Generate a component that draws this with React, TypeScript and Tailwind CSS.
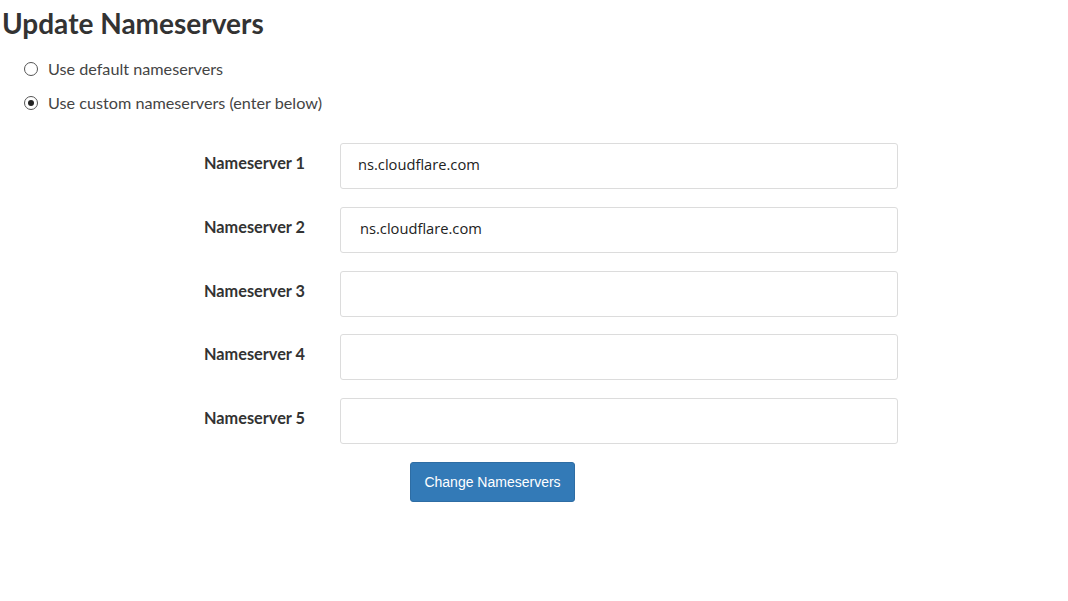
import React, { useState } from "react";

const servers = ["ns.cloudflare.com", "ns.cloudflare.com", "", "", ""];

const Radio: React.FC<{ checked: boolean; label: string; onClick: () => void }> = ({
  checked,
  label,
  onClick,
}) => (
  <label className="flex items-center h-[34px] cursor-pointer" onClick={onClick}>
    <span className="ml-[24px] w-[14px] h-[14px] rounded-full border border-[#555] flex items-center justify-center bg-white">
      {checked && <span className="w-[6px] h-[6px] rounded-full bg-[#222]" />}
    </span>
    <span className="ml-[10px] text-[16.2px] text-[#444]">{label}</span>
  </label>
);

export default function App() {
  const [mode, setMode] = useState<"default" | "custom">("custom");
  const [values, setValues] = useState(servers);

  return (
    <div className="w-[1068px] h-[601px] bg-white font-['Lato','Noto_Sans',sans-serif] text-[#333]">
      <h1 className="pl-[2px] pt-[5px] text-[28px] font-bold leading-[36px] text-[#333]">
        Update Nameservers
      </h1>
      <div className="mt-[11px]">
        <Radio checked={mode === "default"} label="Use default nameservers" onClick={() => setMode("default")} />
        <Radio
          checked={mode === "custom"}
          label="Use custom nameservers (enter below)"
          onClick={() => setMode("custom")}
        />
      </div>
      <div className="mt-[23px] flex flex-col gap-[17.75px]">
        {values.map((v, i) => (
          <div key={i} className="flex items-start">
            <div className="w-[305px] text-right text-[16.3px] font-bold leading-[20px] pt-[10px] text-[#333]">
              Nameserver {i + 1}
            </div>
            <input
              className={`ml-[35px] w-[558px] h-[46px] border border-[#dcdcdc] rounded-[3px] text-[14.7px] text-[#222] font-['Open_Sans',sans-serif] outline-none ${
                i === 1 ? "pl-[19px]" : "pl-[17px]"
              } pb-[4px]`}
              value={v}
              onChange={(e) => {
                const next = [...values];
                next[i] = e.target.value;
                setValues(next);
              }}
            />
          </div>
        ))}
      </div>
      <div className="pl-[410px] mt-[18px]">
        <button className="w-[165px] h-[40px] bg-[#337ab7] text-white rounded-[3px] text-[14px] font-['Liberation_Sans',Arial,sans-serif] border border-[#2e6da4]">
          Change Nameservers
        </button>
      </div>
    </div>
  );
}
